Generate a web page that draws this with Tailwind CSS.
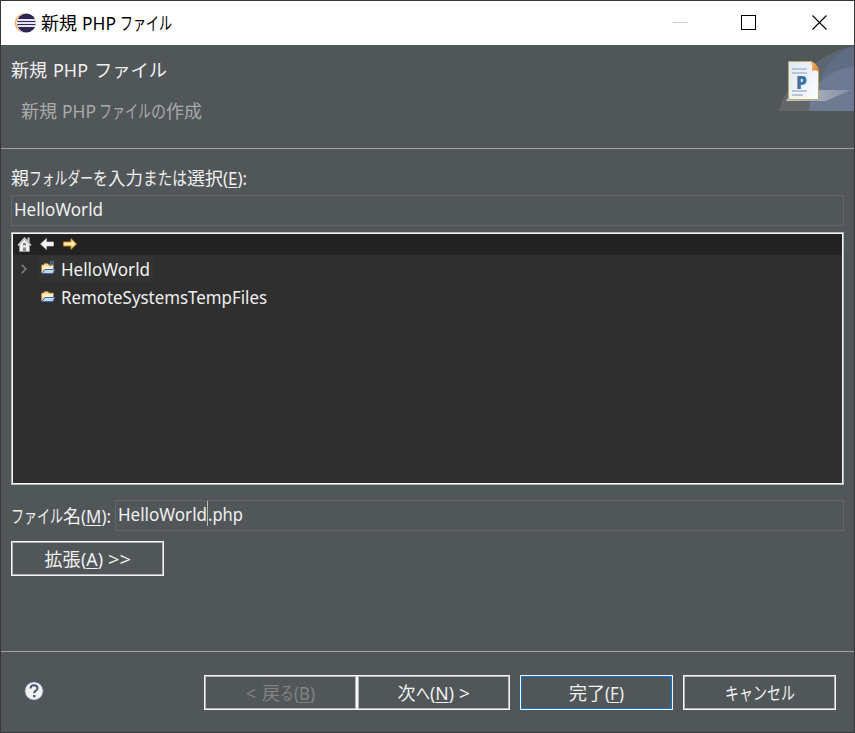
<!DOCTYPE html>
<html lang="ja">
<head>
  <meta charset="UTF-8" />
  <meta name="viewport" content="width=device-width, initial-scale=1.0"/>
  <title>新規 PHP ファイル</title>
  <script src="https://cdn.jsdelivr.net/npm/@tailwindcss/browser@4"></script>
</head>
<body class="overflow-hidden">
  <div class="w-[855px] h-[733px] flex flex-col border border-[#37373a] bg-[#515658] text-[#f0f0f0] font-['Noto_Sans','Noto_Sans_CJK_JP',sans-serif] text-[18px] leading-[24px] whitespace-nowrap">

    <!-- Title bar -->
    <div class="h-[44px] shrink-0 bg-white text-black flex items-center pl-[13px]">
      <svg class="w-[23px] h-[22px] mr-[4px]" viewBox="0 0 23 22">
        <circle cx="10.5" cy="11" r="9.7" fill="#f6a04b"/>
        <circle cx="12.2" cy="11" r="10" fill="#fff"/>
        <circle cx="12.4" cy="11" r="9.4" fill="#2d2552"/>
        <path d="M3.500 8h18M3 11h19M3.500 14h18" stroke="#e8e5f2" stroke-width="1.9"/>
      </svg>
      <span class="flex"><span class="inline-block shrink-0" data-w="36">新規</span><span class="inline-block shrink-0 ml-[5px]" data-w="34">PHP</span><span class="inline-block shrink-0 ml-[4px]" data-w="52">ファイル</span></span>
      <svg class="ml-auto w-[160px] h-[20px] mr-[24px]" viewBox="0 0 160 20" fill="none" shape-rendering="crispEdges">
        <path d="M3 9.500h15" stroke="#ccc"/>
        <path d="M71.500 2.500h14v14h-14z" stroke="#000"/>
        <path d="M142.500 2.500l14 14M156.500 2.500l-14 14" stroke="#000" shape-rendering="auto" stroke-width="1.1"/>
      </svg>
    </div>

    <!-- Wizard header -->
    <div class="h-[104px] shrink-0 flex justify-between border-b border-[#a0a0a0]">
      <div class="pl-[10px] pt-[13px]">
        <div class="flex"><span class="inline-block shrink-0" data-w="36">新規</span><span class="inline-block shrink-0 ml-[6px]" data-w="35">PHP</span><span class="inline-block shrink-0 ml-[6px]" data-w="73">ファイル</span></div>
        <div class="flex mt-[17px] ml-[10px] text-[#a9aaaa]"><span class="inline-block shrink-0" data-w="36">新規</span><span class="inline-block shrink-0 ml-[5px]" data-w="34">PHP</span><span class="inline-block shrink-0 ml-[3px]" data-w="52">ファイル</span><span class="inline-block shrink-0" data-w="15">の</span><span class="inline-block shrink-0" data-w="36">作成</span></div>
      </div>
      <svg class="w-[75px] h-[66px]" viewBox="0 0 75 66">
        <defs>
          <linearGradient id="banner" x1="0" x2="1" y1="0.6" y2="0"><stop offset="0" stop-color="#6c7073"/><stop offset="1" stop-color="#5c6b84"/></linearGradient>
          <linearGradient id="shade" x1="0" x2="1"><stop offset="0" stop-color="#eeeeef"/><stop offset="1" stop-color="#b0b4bd" stop-opacity=".5"/></linearGradient>
          <linearGradient id="paper" x1="0" x2="1" y1="0" y2="1"><stop offset="0" stop-color="#dfe7f3"/><stop offset="1" stop-color="#fdfdfe"/></linearGradient>
          <linearGradient id="fold" x1="0" x2="1" y1="0" y2="1"><stop offset="0" stop-color="#f9c583"/><stop offset="1" stop-color="#d77a18"/></linearGradient>
        </defs>
        <path d="M0 66Q3 50 14 41Q38 8 75 1V66Z" fill="url(#banner)" opacity=".65"/>
        <path d="M38 42Q50 8 75 1V66H30Q31 52 38 42Z" fill="#637390" opacity=".6"/>
        <path d="M30 66Q30 30 75 21V66Z" fill="#7986a2" opacity=".5"/>
        <path d="M14 45H72L47 56H7Z" fill="url(#shade)" opacity=".75"/>
        <path d="M9.500 16.500H32L39.500 25V54.500H9.500Z" fill="url(#paper)" stroke="#b5a970"/>
        <path d="M31 16C36 17 40 22 40 27Q37 24 33 26Q34 20 31 16Z" fill="url(#fold)"/>
        <path d="M13 24h15M13 28h15M13 46h15M13 50h11" stroke="#b8c5dd" stroke-width="2"/>
        <text x="17" y="44" font-family="Open Sans" font-size="18" font-weight="800" fill="#40749f" textLength="11" lengthAdjust="spacingAndGlyphs">P</text>
      </svg>
    </div>

    <!-- Parent folder -->
    <div class="px-[10px] pt-[17px]">
      <div class="flex h-[29px]"><span class="inline-block shrink-0" data-w="18">親</span><span class="inline-block shrink-0" data-w="64">フォルダー</span><span class="inline-block shrink-0" data-w="15">を</span><span class="inline-block shrink-0" data-w="35">入力</span><span class="inline-block shrink-0" data-w="44">または</span><span class="inline-block shrink-0" data-w="36">選択</span><span class="inline-block shrink-0" data-w="24">(<u class="decoration-1 underline-offset-2">E</u>):</span></div>
      <div class="h-[31px] border border-[#646769] pl-[2px] pt-px"><span class="inline-block" data-w="89">HelloWorld</span></div>

      <div class="mt-[6px] h-[253px] border-2 border-[#f5f5f5] outline-1 -outline-offset-1 outline-[#bababa] bg-[#2f2f2f]">
        <div class="h-[21px] bg-[#222] flex items-start">
          <svg class="w-[70px] h-[20px]" viewBox="0 0 70 20">
            <defs><linearGradient id="gold" x1="0" x2="0" y1="0" y2="1"><stop offset="0" stop-color="#fff"/><stop offset="1" stop-color="#fbd568"/></linearGradient></defs>
            <path d="M6.500 17.500V10.500L11.500 5L16.500 10.500V17.500Z" fill="#eee" stroke="#999" stroke-width=".8"/>
            <path d="M14.500 3.500h2v5h-2z" fill="#ccc"/>
            <path d="M5 11.500L11.500 4.300L18 11.500" fill="none" stroke="#ccc" stroke-width="1.600"/>
            <path d="M10 9h3v2.500h-3zM10 13.500h3v3.500h-3z" fill="#888"/>
            <path d="M27.500 10L33.500 4.500V8H40.500V12H33.500V15.500Z" fill="#f5f5f5" stroke="#ccc" stroke-width=".7"/>
            <path d="M63.500 10L58 4.700V8H50.500V12H58V15.300Z" fill="url(#gold)" stroke="#d18a08"/>
          </svg>
        </div>
        <div class="h-[28px] flex items-center">
          <svg class="w-[6px] h-[10px] ml-[8px] shrink-0" viewBox="0 0 6 10"><path d="M.7 .7L5 5L.7 9.300" fill="none" stroke="#858585" stroke-width="1.500"/></svg>
          <div class="ml-[12px] w-[114px] h-[26px] bg-[#333] flex items-center">
            <svg class="w-[18px] h-[18px] mr-[4px] shrink-0" viewBox="0 0 18 18">
              <path d="M2.500 13V5H4.500L5.500 3.500H9L10 5H14.500V13Z" fill="#f5d593" stroke="#b77a3d" stroke-width=".8"/>
              <path d="M3 6h11v3H3z" fill="#fff0bd"/>
              <path d="M3 13.500L6 9.500H16L13.500 13.500Z" fill="#b9dcfb" stroke="#3d64b7"/>
              <path d="M11.500 6V1.500H14.500V4.500H11.500" fill="#34506a" stroke="#4c7696"/>
            </svg>
            <span class="inline-block shrink-0" data-w="89">HelloWorld</span>
          </div>
        </div>
        <div class="h-[28px] flex items-center pl-[26px]">
          <svg class="w-[18px] h-[18px] mr-[4px] shrink-0" viewBox="0 0 18 18">
            <path d="M2.500 13V5H4.500L5.500 3.500H9L10 5H14.500V13Z" fill="#f5d593" stroke="#b77a3d" stroke-width=".8"/>
            <path d="M3 6h11v3H3z" fill="#fff0bd"/>
            <path d="M3 13.500L6 9.500H16L13.500 13.500Z" fill="#b9dcfb" stroke="#3d64b7"/>
          </svg>
          <span class="inline-block shrink-0" data-w="206">RemoteSystemsTempFiles</span>
        </div>
      </div>
    </div>

    <!-- File name -->
    <div class="flex px-[10px] mt-[15px]">
      <div class="flex w-[104px] pt-[4px]"><span class="inline-block shrink-0" data-w="52">ファイル</span><span class="inline-block shrink-0" data-w="18">名</span><span class="inline-block shrink-0" data-w="30">(<u class="decoration-1 underline-offset-2">M</u>):</span></div>
      <div class="flex-1 h-[31px] flex border border-[#646769] pl-[2px] pt-px"><span class="inline-block shrink-0" data-w="89">HelloWorld</span><i class="w-px h-[25px] -mt-px bg-[#b8bcbe]"></i><span class="inline-block shrink-0" data-w="35">.php</span></div>
    </div>

    <button class="ml-[10px] mt-[10px] w-[153px] h-[35px] shrink-0 border border-[#f5f5f5] outline-1 -outline-offset-2 outline-[#b5b5b5] flex justify-center items-center pt-px"><span class="inline-block shrink-0" data-w="36">拡張</span><span class="inline-block shrink-0" data-w="22">(<u class="decoration-1 underline-offset-2">A</u>)</span><span class="inline-block shrink-0 ml-[5px]" data-w="23">&gt;&gt;</span></button>

    <!-- Button bar -->
    <div class="mt-auto h-[81px] border-t border-[#a0a0a0] flex items-start pt-[23px] pl-[23px] pr-[18px]">
      <svg class="w-[20px] h-[20px] mt-[6px]" viewBox="0 0 20 20">
        <circle cx="10" cy="10" r="9.300" fill="#f2f2f2" stroke="#506080"/>
        <path d="M6.500 7.500Q6.500 4.300 10 4.300T13.500 7.300Q13.500 9 11.500 10Q10.200 10.700 10.200 12.300" fill="none" stroke="#465878" stroke-width="2"/>
        <path d="M9 14h2.400v2.300H9z" fill="#465878"/>
      </svg>
      <div class="ml-auto flex">
        <button class="w-[153px] h-[35px] border border-[#f5f5f5] outline-1 -outline-offset-2 outline-[#b5b5b5] text-[#838383] flex justify-center items-center pt-px"><span class="inline-block shrink-0" data-w="10">&lt;</span><span class="inline-block shrink-0 ml-[6px]" data-w="18">戻</span><span class="inline-block shrink-0" data-w="14">る</span><span class="inline-block shrink-0" data-w="21">(<u class="decoration-1 underline-offset-2">B</u>)</span></button>
        <button class="w-[153px] h-[35px] border border-[#f5f5f5] outline-1 -outline-offset-2 outline-[#b5b5b5] flex justify-center items-center pt-px"><span class="inline-block shrink-0" data-w="18">次</span><span class="inline-block shrink-0" data-w="14">へ</span><span class="inline-block shrink-0" data-w="24">(<u class="decoration-1 underline-offset-2">N</u>)</span><span class="inline-block shrink-0 ml-[5px]" data-w="11">&gt;</span></button>
        <button class="ml-[10px] w-[153px] h-[35px] border border-[#f5f5f5] outline-1 -outline-offset-2 outline-[#0078d7] flex justify-center items-center pt-px"><span class="inline-block shrink-0" data-w="36">完了</span><span class="inline-block shrink-0" data-w="19">(<u class="decoration-1 underline-offset-2">F</u>)</span></button>
        <button class="ml-[10px] w-[153px] h-[35px] border border-[#f5f5f5] outline-1 -outline-offset-2 outline-[#b5b5b5] flex justify-center items-center pt-px"><span class="inline-block shrink-0" data-w="70">キャンセル</span></button>
      </div>
    </div>
  </div>

  <script>
    // Condense each text run to its UI width, again whenever its own size changes
    const fitter = new ResizeObserver(entries => {
      entries.forEach(entry => {
        const run = entry.target;
        const natural = entry.borderBoxSize[0].inlineSize;
        const target = Number(run.dataset.w);
        run.style.transformOrigin = 'left';
        run.style.transform = `scaleX(${target / natural})`;
        run.style.marginRight = `${target - natural}px`;
      });
    });
    document.querySelectorAll('[data-w]').forEach(run => fitter.observe(run));
  </script>
</body>
</html>
